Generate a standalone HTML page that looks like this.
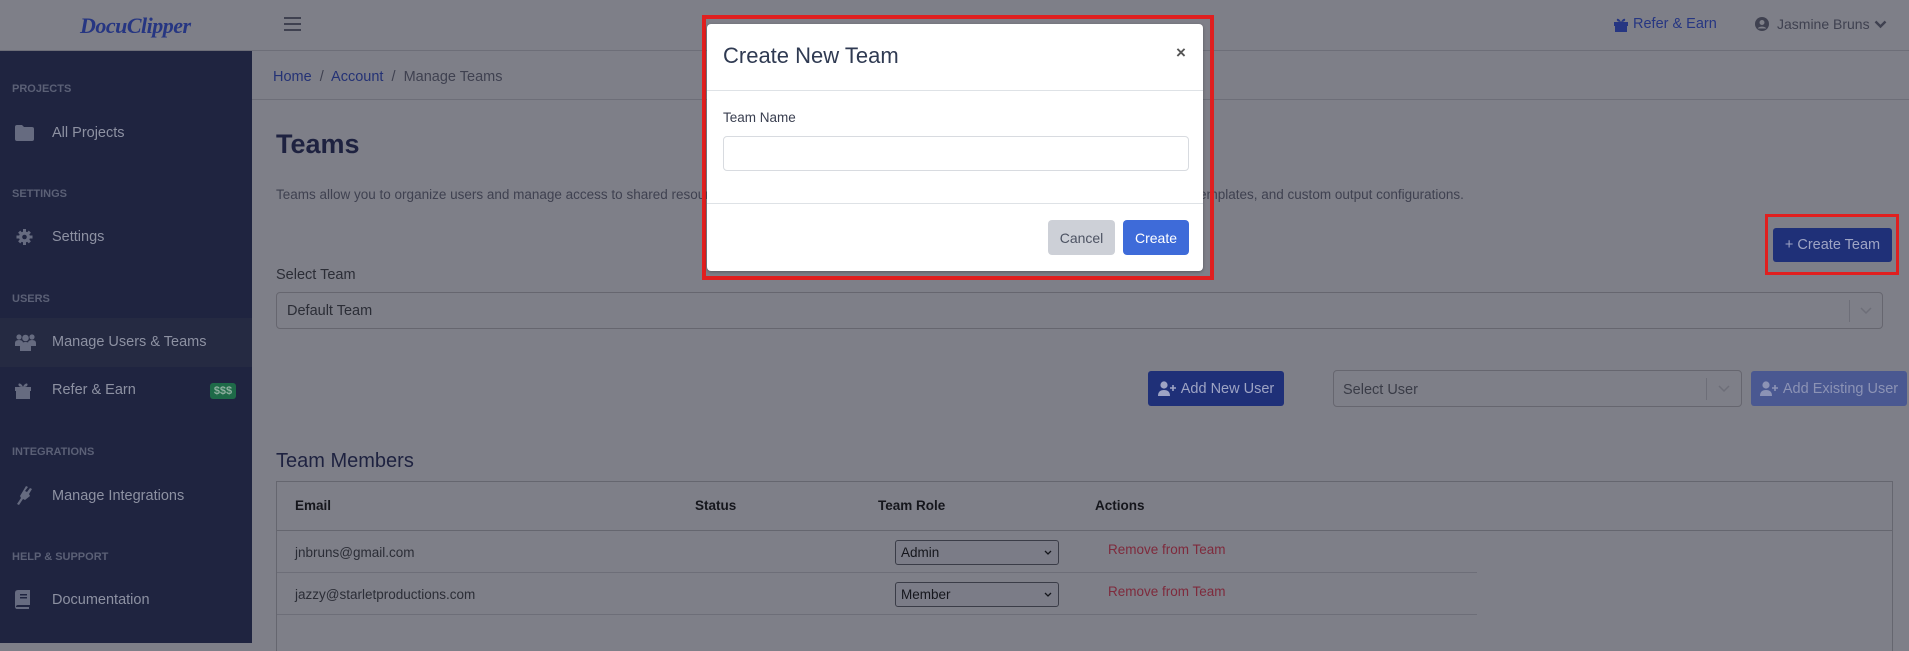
<!DOCTYPE html>
<html><head><meta charset="utf-8">
<style>
*{box-sizing:border-box;margin:0;padding:0}
body{width:1909px;height:643px;overflow:hidden;background:#7e7f88;font-family:"Liberation Sans",sans-serif;position:relative;color:#33353f}
.a{position:absolute;white-space:nowrap}
#side{position:absolute;left:0;top:51px;width:252px;height:592px;background:#1f2440}
.sec{position:absolute;left:12px;font-size:11px;font-weight:bold;color:#5b6076}
.it{position:absolute;left:52px;font-size:14.5px;color:#8d91a2}
.ic{position:absolute;left:15px;width:19px;height:16px;fill:#666b80}
.sel{position:absolute;border:1px solid #66666f;border-radius:4px;background:#7e7f88}
.btn{position:absolute;border-radius:3px;color:#9ea4c4;font-size:14.5px;display:flex;align-items:center;justify-content:center;gap:4px}
</style></head><body>
<div class="a" style="left:0;top:0;width:1909px;height:51px;border-bottom:1px solid #6d6e78"></div>
<div class="a" style="left:80px;top:13px;font-family:'Liberation Serif',serif;font-style:italic;font-weight:bold;font-size:22px;color:#263682;letter-spacing:-0.5px">DocuClipper</div>
<div class="a" style="left:284px;top:17px;width:17px;height:2px;background:#3f4150;box-shadow:0 6px 0 #3f4150,0 12px 0 #3f4150"></div>
<svg class="a" style="left:1614px;top:17px" width="14" height="15" viewBox="0 0 14 15"><path fill="#263682" d="M0 5h14v4H0zM1 9h12v6H1zM6 5h2v10H6zM7 5C5 1 2 1 3 3.5 4 5 7 5 7 5zM7 5c2-4 5-4 4-1.5C10 5 7 5 7 5z"/></svg>
<div class="a" style="left:1633px;top:16px;font-size:14.5px;color:#263682">Refer &amp; Earn</div>
<svg class="a" style="left:1755px;top:17px" width="14" height="14" viewBox="0 0 14 14"><circle cx="7" cy="7" r="7" fill="#3f4150"/><circle cx="7" cy="5.5" r="2.5" fill="#7e7f88"/><path d="M2.8 11.5c1-2.5 7.4-2.5 8.4 0" fill="#7e7f88"/></svg>
<div class="a" style="left:1777px;top:16px;font-size:14px;color:#3f4150">Jasmine Bruns</div>
<svg class="a" style="left:1874px;top:20px" width="13" height="9" viewBox="0 0 13 9"><path d="M1.5 1.5l5 5 5-5" stroke="#3f4150" stroke-width="2.4" fill="none"/></svg>
<div id="side">
<div class="a" style="left:0;top:267px;width:252px;height:49px;background:#252a42"></div>
</div>
<div class="sec" style="top:83px">PROJECTS</div>
<svg class="ic" style="top:125px" viewBox="0 0 19 16"><path d="M0 2q0-2 2-2h5l2 2h8q2 0 2 2v10q0 2-2 2H2q-2 0-2-2z"/></svg>
<div class="it" style="top:125px">All Projects</div>
<div class="sec" style="top:188px">SETTINGS</div>
<svg class="ic" style="top:229px" viewBox="0 0 16 16"><circle cx="8" cy="8" r="5.5"/><path d="M6.5 0h3v3h-3zM6.5 13h3v3h-3zM0 6.5h3v3H0zM13 6.5h3v3h-3zM1.6 3.7l2.1-2.1 2 2-2.1 2.1zM10.3 12.4l2.1-2.1 2 2-2.1 2.1zM1.6 12.3l2-2 2.1 2.1-2 2zM10.3 3.6l2-2 2.1 2.1-2 2z"/><circle cx="8" cy="8" r="2.3" fill="#1f2440"/></svg>
<div class="it" style="top:229px">Settings</div>
<div class="sec" style="top:293px">USERS</div>
<svg class="ic" style="top:333px;width:21px;height:18px" viewBox="0 0 21 18"><circle cx="4" cy="4" r="2.6"/><circle cx="17" cy="4" r="2.6"/><circle cx="10.5" cy="5" r="3.3"/><path d="M0 10q0-3 4-3t4 3v3H0zM13 10q0-3 4-3t4 3v3h-8zM5 14q0-5 5.5-5T16 14v4H5z"/></svg>
<div class="it" style="top:334px">Manage Users &amp; Teams</div>
<svg class="ic" style="top:382px;width:16px;height:17px" viewBox="0 0 16 17"><path d="M0 5h16v4H0zM1 9h14v8H1zM7 5h2v12H7zM8 5C6 0 2 1 4 4 5 5 8 5 8 5zM8 5c2-5 6-4 4-1C11 5 8 5 8 5z"/></svg>
<div class="it" style="top:382px">Refer &amp; Earn</div>
<div class="a" style="left:210px;top:383px;width:26px;height:16px;background:#1e6a48;border-radius:3px;color:#8fb0a0;font-size:11px;font-weight:bold;text-align:center;line-height:16px">$$$</div>
<div class="sec" style="top:446px">INTEGRATIONS</div>
<svg class="ic" style="top:486px;width:17px;height:19px" viewBox="0 0 17 19"><path d="M11 0l2 1-3 4 2 1 3-4 2 1-3 5 1 2-5 4-2-1-4 6-2-1 4-6-1-2z"/></svg>
<div class="it" style="top:488px">Manage Integrations</div>
<div class="sec" style="top:551px">HELP &amp; SUPPORT</div>
<svg class="ic" style="top:590px;width:15px;height:19px" viewBox="0 0 15 19"><path d="M3 0h12v15H3q-2 0-2 2h13v2H2Q0 19 0 16V3Q0 0 3 0z"/><path d="M5 4h7v1.5H5zM5 7h7v1.5H5z" fill="#1f2440"/></svg>
<div class="it" style="top:592px">Documentation</div>
<div class="a" style="left:273px;top:69px;font-size:14.5px;color:#243275">Home <span style="color:#3f4150">&nbsp;/&nbsp;</span> Account <span style="color:#3f4150">&nbsp;/&nbsp; Manage Teams</span></div>
<div class="a" style="left:252px;top:99px;width:1657px;height:1px;background:#6d6e78"></div>
<div class="a" style="left:276px;top:129px;font-size:27px;font-weight:bold;color:#1e2240">Teams</div>
<div class="a" style="left:276px;top:187px;font-size:13.5px;color:#3f4150">Teams allow you to organize users and manage access to shared resources such as projects, processing rules, and extraction t</div>
<div class="a" style="left:1199px;top:187px;font-size:13.5px;color:#3f4150">emplates, and custom output configurations.</div>
<div class="btn" style="left:1773px;top:228px;width:119px;height:34px;background:#1f3078">+ Create Team</div>
<div class="a" style="left:1765px;top:214px;width:134px;height:61px;border:3px solid #e01f1f"></div>
<div class="a" style="left:276px;top:267px;font-size:14.5px;color:#2b2d36">Select Team</div>
<div class="sel" style="left:276px;top:292px;width:1607px;height:37px"></div>
<div class="a" style="left:287px;top:303px;font-size:14.5px;color:#2b2d36">Default Team</div>
<div class="a" style="left:1849px;top:300px;width:1px;height:22px;background:#6d6e78"></div>
<svg class="a" style="left:1860px;top:307px" width="12" height="8" viewBox="0 0 12 8"><path d="M1 1l5 5 5-5" stroke="#6d6e78" stroke-width="1.5" fill="none"/></svg>
<div class="btn" style="left:1148px;top:371px;width:136px;height:35px;background:#1f3078"><svg width="19" height="15" viewBox="0 0 19 15"><circle cx="6" cy="4" r="3.6" fill="#9ea4c4"/><path d="M0 15q0-6 6-6t6 6z" fill="#9ea4c4"/><path d="M12 7h6M15 4v6" stroke="#9ea4c4" stroke-width="1.6"/></svg>Add New User</div>
<div class="sel" style="left:1333px;top:370px;width:409px;height:37px"></div>
<div class="a" style="left:1343px;top:382px;font-size:14.5px;color:#3a3c47">Select User</div>
<div class="a" style="left:1706px;top:378px;width:1px;height:22px;background:#6d6e78"></div>
<svg class="a" style="left:1718px;top:385px" width="12" height="8" viewBox="0 0 12 8"><path d="M1 1l5 5 5-5" stroke="#6d6e78" stroke-width="1.5" fill="none"/></svg>
<div class="btn" style="left:1751px;top:371px;width:156px;height:35px;background:#4a5891;color:#8c93b5"><svg width="19" height="15" viewBox="0 0 19 15"><circle cx="6" cy="4" r="3.6" fill="#8c93b5"/><path d="M0 15q0-6 6-6t6 6z" fill="#8c93b5"/><path d="M12 7h6M15 4v6" stroke="#8c93b5" stroke-width="1.6"/></svg>Add Existing User</div>
<div class="a" style="left:276px;top:450px;font-size:20px;color:#1e2240">Team Members</div>
<div class="a" style="left:276px;top:481px;width:1617px;height:170px;border:1px solid #65666f;border-bottom:none"></div>
<div class="a" style="left:277px;top:530px;width:1615px;height:1px;background:#65666f"></div>
<div class="a" style="left:295px;top:498px;font-size:13.5px;font-weight:bold;color:#15161c">Email</div>
<div class="a" style="left:695px;top:498px;font-size:13.5px;font-weight:bold;color:#15161c">Status</div>
<div class="a" style="left:878px;top:498px;font-size:13.5px;font-weight:bold;color:#15161c">Team Role</div>
<div class="a" style="left:1095px;top:498px;font-size:13.5px;font-weight:bold;color:#15161c">Actions</div>
<div class="a" style="left:295px;top:545px;font-size:13.5px;color:#2b2d36">jnbruns@gmail.com</div>
<div class="a" style="left:295px;top:587px;font-size:13.5px;color:#2b2d36">jazzy@starletproductions.com</div>
<div class="a" style="left:277px;top:572px;width:1200px;height:1px;background:#6d6e78"></div>
<div class="a" style="left:277px;top:614px;width:1200px;height:1px;background:#6d6e78"></div>
<div class="a" style="left:895px;top:540px;width:164px;height:25px;border:1px solid #3a3c47;border-radius:3px;background:#7b7c87;font-size:13.5px;color:#15161c;padding:4px 5px">Admin<svg style="position:absolute;right:6px;top:9px" width="8" height="6" viewBox="0 0 8 6"><path d="M1 1l3 3 3-3" stroke="#15161c" stroke-width="1.3" fill="none"/></svg></div>
<div class="a" style="left:895px;top:582px;width:164px;height:25px;border:1px solid #3a3c47;border-radius:3px;background:#7b7c87;font-size:13.5px;color:#15161c;padding:4px 5px">Member<svg style="position:absolute;right:6px;top:9px" width="8" height="6" viewBox="0 0 8 6"><path d="M1 1l3 3 3-3" stroke="#15161c" stroke-width="1.3" fill="none"/></svg></div>
<div class="a" style="left:1108px;top:542px;font-size:13.5px;color:#7e2a3c">Remove from Team</div>
<div class="a" style="left:1108px;top:584px;font-size:13.5px;color:#7e2a3c">Remove from Team</div>
<div class="a" style="left:702px;top:15px;width:512px;height:265px;border:4px solid #e01f1f"></div>
<div class="a" style="left:707px;top:24px;width:496px;height:247px;background:#fff;border-radius:4px;box-shadow:0 1px 3px rgba(0,0,0,.3)"></div>
<div class="a" style="left:723px;top:43px;font-size:22px;color:#2f3a52">Create New Team</div>
<div class="a" style="left:1176px;top:43px;font-size:17px;font-weight:bold;color:#555">&#215;</div>
<div class="a" style="left:707px;top:90px;width:496px;height:1px;background:#dee2e6"></div>
<div class="a" style="left:723px;top:110px;font-size:13.5px;color:#3a3f50">Team Name</div>
<div class="a" style="left:723px;top:136px;width:466px;height:35px;border:1px solid #d8dbe0;border-radius:4px"></div>
<div class="a" style="left:707px;top:203px;width:496px;height:1px;background:#dee2e6"></div>
<div class="btn" style="left:1048px;top:220px;width:67px;height:35px;background:#cdd0d7;color:#4d5363;font-size:14px;border-radius:4px">Cancel</div>
<div class="btn" style="left:1123px;top:220px;width:66px;height:35px;background:#3e6bd9;color:#fff;font-size:14px;border-radius:4px">Create</div>
</body></html>
